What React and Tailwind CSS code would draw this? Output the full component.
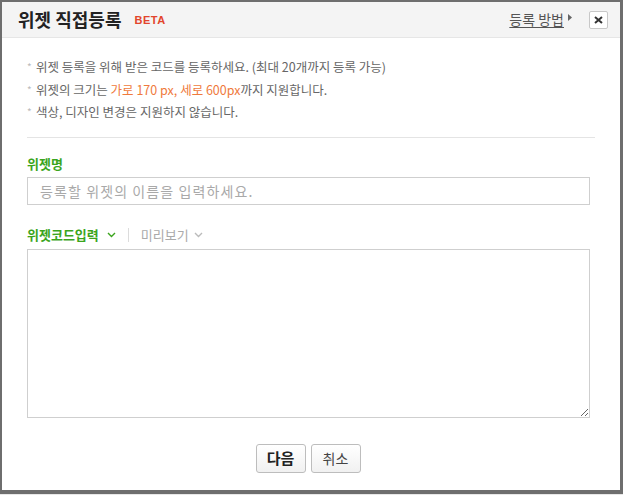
import React from "react";

const KR = { fontFamily: '"Noto Sans CJK KR", "Noto Sans", sans-serif' };

function Chevron({ color, className }) {
  return (
    <svg width="9" height="6" viewBox="0 0 9 6" className={className}>
      <path d="M1 1 L4.5 4.5 L8 1" fill="none" stroke={color} strokeWidth="1.4" />
    </svg>
  );
}

export default function App() {
  return (
    <div className="w-[623px] h-[495px] bg-[#e8e8e8]" style={KR}>
      <div className="w-[623px] h-[494px] border-t-2 border-l-2 border-r-[3px] border-b-4 border-[#6e6e6e] bg-white flex flex-col">
        {/* header */}
        <div className="h-[36px] bg-[#f4f4f4] border-b border-[#e6e6e6] flex items-center pl-[16px] pr-[12px]">
          <h1 className="text-[18px] font-bold text-[#222]">위젯 직접등록</h1>
          <span className="ml-[13px] mt-[2px] text-[11px] font-black text-[#e2452c] tracking-[0.5px]" style={{ fontFamily: '"Liberation Sans", Arial, sans-serif' }}>BETA</span>
          <div className="ml-auto flex items-center">
            <a className="text-[14px] text-[#555] underline underline-offset-2">등록 방법</a>
            <svg width="4" height="7" viewBox="0 0 4 7" className="ml-[4px] -mt-[4px]">
              <path d="M0 0 L4 3.5 L0 7 Z" fill="#666" />
            </svg>
            <button className="ml-[17px] w-[19px] h-[18px] border border-[#c8c8c8] rounded-[2px] bg-white flex items-center justify-center">
              <svg width="9" height="8" viewBox="0 0 9 8">
                <path d="M1 1 L8 7 M8 1 L1 7" stroke="#333" strokeWidth="2" />
              </svg>
            </button>
          </div>
        </div>

        {/* body */}
        <div className="flex-1 flex flex-col pl-[25px] pr-[25px]">
          <ul className="pt-[18px] pb-[13px] border-b border-[#e4e4e4] text-[12.5px] text-[#666] leading-[22.5px]">
            <li className="flex"><span className="text-[#bbb] w-[9px] text-[10px]">*</span>위젯 등록을 위해 받은 코드를 등록하세요. (최대 20개까지 등록 가능)</li>
            <li className="flex"><span className="text-[#bbb] w-[9px] text-[10px]">*</span>위젯의 크기는&nbsp;<span className="text-[#ef7a3c]">가로 170 px, 세로 600px</span>까지 지원합니다.</li>
            <li className="flex"><span className="text-[#bbb] w-[9px] text-[10px]">*</span>색상, 디자인 변경은 지원하지 않습니다.</li>
          </ul>

          <div className="pr-[5px]">
            <div className="mt-[17px] text-[13px] font-bold text-[#3ba51d] leading-[18px]">위젯명</div>
            <input
              className="mt-[4px] w-full h-[28px] border border-[#cfcfcf] px-[12px] text-[14px] tracking-[1.1px] outline-none placeholder:text-[#a9a9a9]"
              placeholder="등록할 위젯의 이름을 입력하세요."
              style={KR}
            />

            <div className="mt-[21px] flex items-center text-[13px] leading-[18px]">
              <span className="font-bold text-[#3ba51d]">위젯코드입력</span>
              <Chevron color="#3ba51d" className="ml-[8px] mt-[1px]" />
              <span className="mx-[12px] w-px h-[14px] bg-[#dcdcdc]" />
              <span className="text-[#aaa]">미리보기</span>
              <Chevron color="#bbb" className="ml-[5px] mt-[1px]" />
            </div>
            <textarea
              className="block mt-[5px] w-full h-[169px] border border-[#cfcfcf] outline-none resize p-2 text-[13px]"
              style={KR}
            />
          </div>

          <div className="mt-[26px] flex justify-center gap-[5px] pr-[6px]">
            <button className="w-[50px] h-[29px] border border-[#bdbdbd] rounded-[3px] bg-gradient-to-b from-white to-[#f1f1f1] text-[15px] font-bold text-[#222]">다음</button>
            <button className="w-[50px] h-[29px] border border-[#bdbdbd] rounded-[3px] bg-gradient-to-b from-white to-[#f1f1f1] text-[14px] text-[#444]">취소</button>
          </div>
        </div>
      </div>
    </div>
  );
}
